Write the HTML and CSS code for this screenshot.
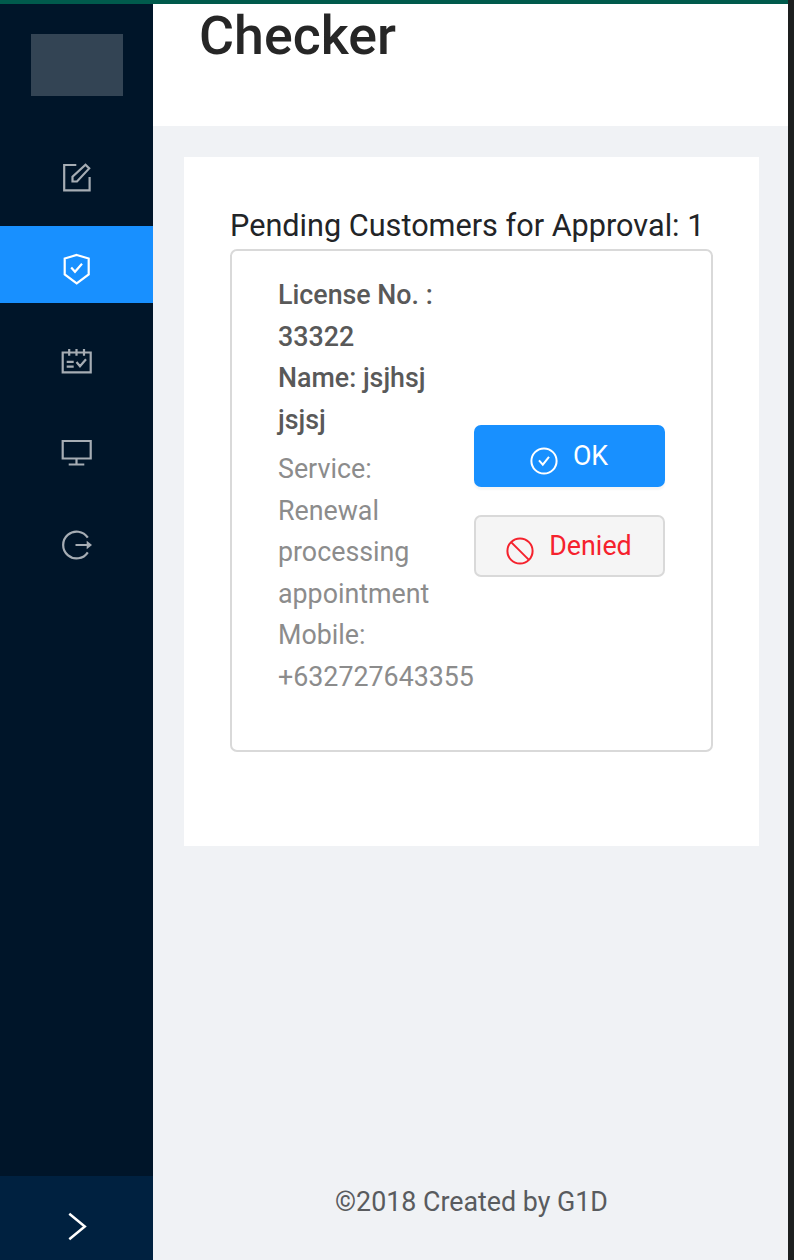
FILE: index.html
```html
<!DOCTYPE html>
<html lang="en">
<head>
<meta charset="utf-8">
<title>Checker</title>
<link rel="stylesheet" href="styles.css">
</head>
<body>
<div class="layout">
  <aside class="sidebar">
    <div class="logo"></div>
    <nav class="menu">
      <a class="menu-item"><svg class="icon" viewBox="0 0 32 32"><path d="M16.3 4H4.2V29.3H29.6V16"/><path d="M12.5 20.5V15.8L25.5 3.7L29.2 7.4L17 20.5Z"/></svg></a>
      <a class="menu-item active"><svg class="icon" viewBox="0 0 32 32"><path d="M16.7 2L28.7 5.5V21.5L16.7 30.3L4.7 21.5V5.5Z"/><path d="M11.2 14.5L15 18.8L22 10.7"/></svg></a>
      <a class="menu-item"><svg class="icon" viewBox="0 0 32 32"><path d="M2.7 7.5H30.7V27.3H2.7ZM9.2 4V10.7M16.5 4V10.7M24 4V10.7M6.7 16.8H13.7M6.7 21.7H13.7M16.5 17L20 21.3L26 14.3"/></svg></a>
      <a class="menu-item"><svg class="icon" viewBox="0 0 32 32"><path d="M2.7 4H30.7V21.5H2.7ZM16.5 21.5V27.5M8.7 27.5H24.3"/></svg></a>
      <a class="menu-item"><svg class="icon" viewBox="0 0 32 32"><path d="M27.8 8.7A13.4 13.4 0 1 0 27.8 23.3M15.5 16H28"/><path class="solid" d="M26.7 11.7L32 16L26.7 20.3Z"/></svg></a>
    </nav>
    <div class="trigger"><svg class="chevron" viewBox="0 0 32 32"><path d="M9.3 3.7L24.8 16.5L9.3 29.3"/></svg></div>
  </aside>
  <main class="main">
    <header class="header"><h1 class="title">Checker</h1></header>
    <section class="content">
      <h2 class="heading">Pending Customers for Approval: 1</h2>
      <div class="card">
        <div class="meta">
          <div class="meta-title">License No. : 33322<br>Name: jsjhsj jsjsj</div>
          <div class="meta-text">Service: Renewal processing appointment<br>Mobile: +632727643355</div>
        </div>
        <div class="actions">
          <button class="button primary"><svg class="button-icon" viewBox="0 0 28 28"><circle cx="14" cy="14" r="12.6"/><path d="M9 13.3L12.8 17.7L19 9.8"/></svg><span>OK</span></button>
          <button class="button danger"><svg class="button-icon" viewBox="0 0 28 28"><circle cx="14" cy="14" r="12.6"/><path d="M5.1 5.1L22.9 22.9"/></svg><span>Denied</span></button>
        </div>
      </div>
    </section>
    <footer class="footer">©2018 Created by G1D</footer>
  </main>
</div>
</body>
</html>
```
FILE: styles.css
```css
* { box-sizing: border-box; }
body {
  margin: 0;
  background: #1d1f1f;
  font: 26.8px/41.5px Roboto, sans-serif;
}
.layout {
  display: flex;
  width: 788px;
  height: 1260px;
  border-top: 4px solid #005a4c;
  background: #f0f2f5;
  overflow: hidden;
}
.sidebar {
  display: flex;
  flex-direction: column;
  width: 153px;
  flex: none;
  background: #001529;
}
.logo {
  width: 92px;
  height: 62px;
  margin: 30px 0 0 31px;
  background: #334454;
}
.menu {
  display: flex;
  flex-direction: column;
  gap: 15px;
  margin-top: 38px;
}
.menu-item {
  height: 77px;
  padding: 27px 0 0 60px;
  color: #a6adb4;
}
.menu-item.active {
  background: #1890ff;
  color: #fff;
}
svg {
  display: block;
  flex: none;
  fill: none;
  stroke: currentColor;
}
.icon {
  width: 32px;
  height: 32px;
  stroke-width: 2.2;
}
.solid {
  fill: currentColor;
  stroke: none;
}
.trigger {
  height: 84px;
  margin-top: auto;
  padding: 34px 0 0 60px;
  background: #002140;
  color: #fff;
}
.chevron {
  width: 32px;
  height: 32px;
  stroke-width: 2.5;
}
.main {
  display: flex;
  flex-direction: column;
  flex: 1;
}
.header {
  height: 122px;
  padding: 0 46px;
  background: #fff;
}
.title {
  margin: 0;
  color: #262626;
  font-size: 53.7px;
  font-weight: 500;
  line-height: 64px;
}
.content {
  height: 689px;
  margin: 31px 29px 0 31px;
  padding: 45px 46px;
  background: #fff;
}
.heading {
  margin: 0;
  color: #222427;
  font-size: 30.65px;
  font-weight: 400;
  line-height: 47px;
  white-space: nowrap;
}
.card {
  display: flex;
  height: 503px;
  padding: 24px 46px 23px;
  border: 2px solid #d9d9d9;
  border-radius: 7px;
}
.meta {
  width: 196px;
}
.meta-title {
  width: 170px;
  margin-bottom: 8px;
  color: #595959;
  font-weight: 500;
}
.meta-text {
  color: #8c8c8c;
}
.actions {
  display: flex;
  flex-direction: column;
  gap: 28px;
  width: 191px;
  margin-top: 150px;
}
.button {
  display: flex;
  justify-content: center;
  gap: 15px;
  height: 62px;
  padding: 9px 1px 0 0;
  border: 2px solid #d9d9d9;
  border-radius: 7px;
  font: inherit;
}
.button-icon {
  width: 28px;
  height: 28px;
  margin-top: 11px;
  stroke-width: 2;
}
.primary {
  border-color: #1890ff;
  background: #1890ff;
  color: #fff;
  box-shadow: 0 3px 2px rgba(0, 0, 0, 0.04);
}
.danger {
  background: #f5f5f5;
  color: #f5222d;
}
.footer {
  margin: auto 0 37px;
  padding-left: 2px;
  color: #595b5e;
  text-align: center;
}
```
